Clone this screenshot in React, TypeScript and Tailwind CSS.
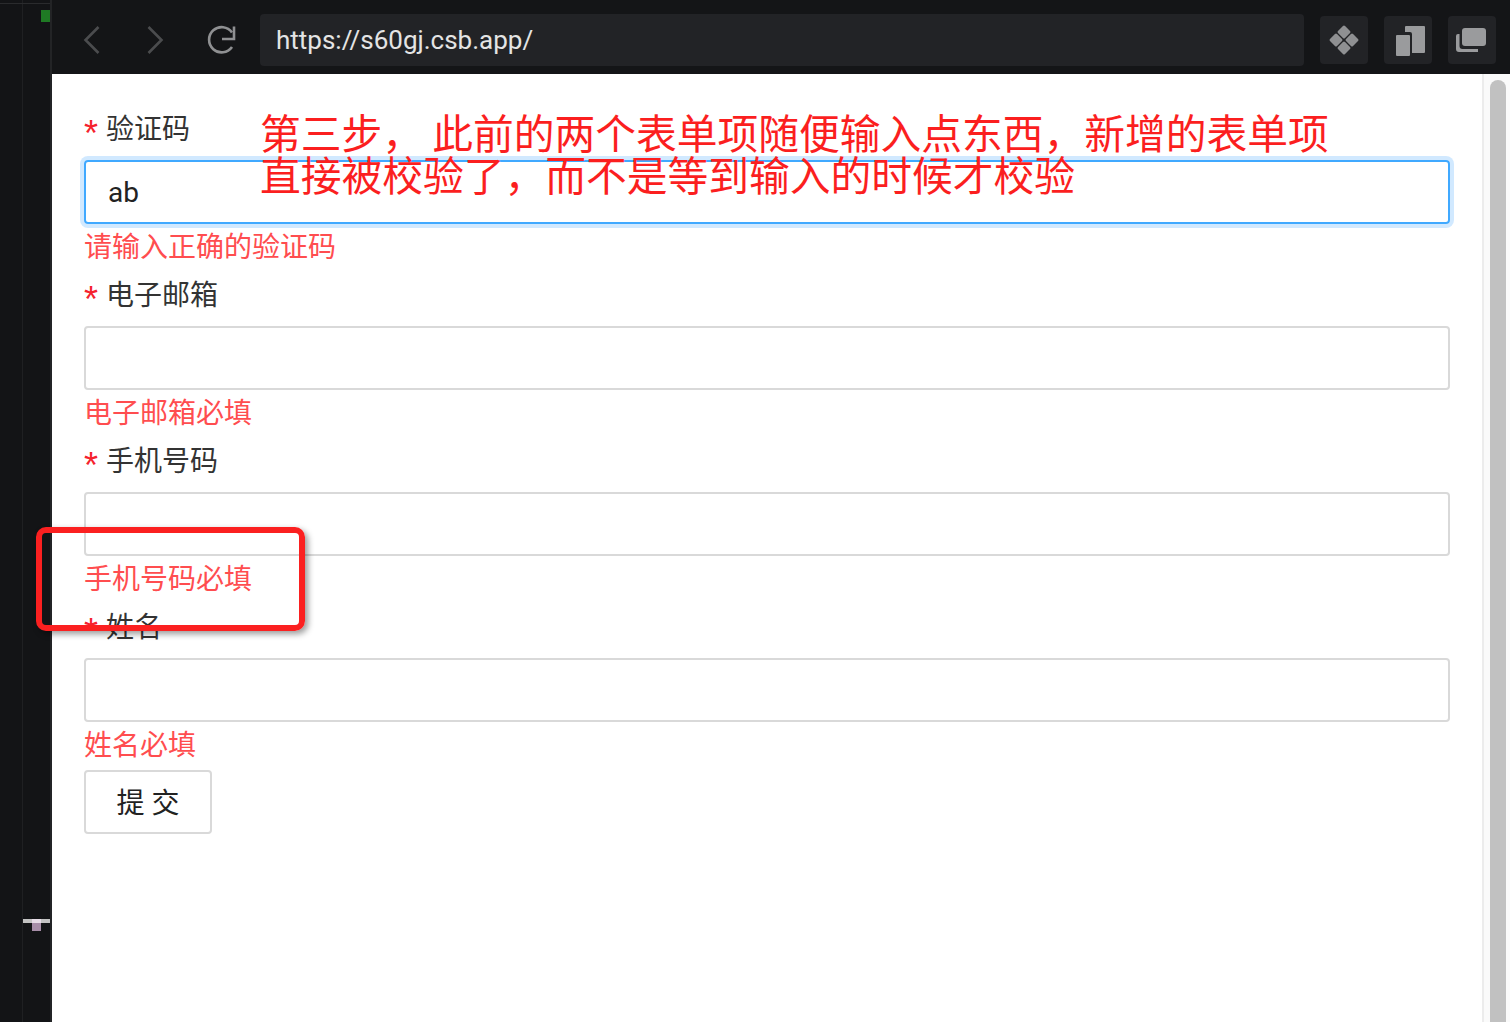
import React from 'react';

const fields = [
  { label: '验证码', error: '请输入正确的验证码', value: 'ab', focused: true },
  { label: '电子邮箱', error: '电子邮箱必填', value: '' },
  { label: '手机号码', error: '手机号码必填', value: '' },
  { label: '姓名', error: '姓名必填', value: '' },
];

function FormItem({ label, error, value, focused }: { label: string; error: string; value: string; focused?: boolean }) {
  return (
    <div className="mb-1">
      <div className="flex items-center h-11 pt-1 text-[28px] text-[#333]">
        <span className="text-[#f5222d] w-[22px] shrink-0 text-[36px] leading-none pt-2 [font-family:'Liberation_Sans',sans-serif]">*</span>
        <span>{label}</span>
      </div>
      <input
        readOnly
        value={value}
        className={
          focused
            ? 'mt-2.5 block w-full h-16 rounded border-2 border-[#40a9ff] px-[22px] text-[28px] text-[#222] outline-none shadow-[0_0_0_4px_rgba(24,144,255,0.2)]'
            : 'mt-2.5 block w-full h-16 rounded border-2 border-[#d9d9d9] px-[22px] text-[28px] text-[#222] outline-none'
        }
      />
      <div className="h-11 leading-[48px] text-[28px] text-[#ff4d4f]">{error}</div>
    </div>
  );
}

function ToolButton({ children }: { children: React.ReactNode }) {
  return <div className="w-12 h-12 rounded bg-[#222326] flex items-center justify-center">{children}</div>;
}

export default function App() {
  return (
    <div className="flex w-[1510px] h-[1022px] overflow-hidden bg-white [font-family:Roboto,'Noto_Sans_CJK_SC',sans-serif]">
      {/* Left strip */}
      <div className="relative w-[52px] shrink-0 bg-[#131416] border-r-2 border-[#232426]">
        <div className="absolute left-[22px] top-0 bottom-0 w-px bg-[#1f2022]" />
        <div className="absolute left-0 top-[3px] w-[50px] h-px bg-[#2a2b2d]" />
        <div className="absolute left-[41px] top-[10px] w-[9px] h-3 bg-[#1f7a24]" />
        <div className="absolute left-[23px] top-[919px] w-[27px] h-1 bg-[#c2c2c2]" />
        <div className="absolute left-[32px] top-[919px] w-[9px] h-1 bg-[#e6dce6]" />
        <div className="absolute left-[32px] top-[923px] w-[9px] h-2 bg-[#a78ea8]" />
      </div>

      <div className="flex-1 flex flex-col min-w-0">
        {/* Browser bar */}
        <div className="h-[74px] shrink-0 bg-[#141517] flex items-center pt-1.5">
          <svg className="ml-6" width="32" height="32" viewBox="0 0 32 32" fill="none" stroke="#4b4c4e" strokeWidth="2.6">
            <path d="M22.5 3 9.5 16l13 13" />
          </svg>
          <svg className="ml-[31px]" width="32" height="32" viewBox="0 0 32 32" fill="none" stroke="#4b4c4e" strokeWidth="2.6">
            <path d="M9.5 3l13 13-13 13" />
          </svg>
          <svg className="ml-[34px]" width="32" height="32" viewBox="0 0 32 32" fill="none" stroke="#8f9092" strokeWidth="2.6">
            <path d="M27 8.5A12.6 12.6 0 1 0 27 23" />
            <path d="M29 2.5V15H17" />
          </svg>
          <div className="ml-[23px] w-[1044px] h-[52px] rounded bg-[#222326] flex items-center pl-4 text-[26px] text-[#e4e4e4]">
            https://s60gj.csb.app/
          </div>
          <div className="ml-4 flex gap-4">
            <ToolButton>
              <svg width="32" height="32" viewBox="0 0 32 32" fill="#8f9092">
                <rect x="11" y="3" width="10" height="10" rx="1.5" transform="rotate(45 16 8)" />
                <rect x="3" y="11" width="10" height="10" rx="1.5" transform="rotate(45 8 16)" />
                <rect x="19" y="11" width="10" height="10" rx="1.5" transform="rotate(45 24 16)" />
                <rect x="11" y="19" width="10" height="10" rx="1.5" transform="rotate(45 16 24)" />
              </svg>
            </ToolButton>
            <ToolButton>
              <svg className="overflow-visible" width="32" height="32" viewBox="0 0 32 32" fill="#9a9b9d">
                <path d="M14 2h18a1 1 0 0 1 1 1v25a1 1 0 0 1-1 1H20V10a2 2 0 0 0-2-2h-5V3a1 1 0 0 1 1-1z" />
                <rect x="4" y="11" width="14" height="21" rx="1" />
              </svg>
            </ToolButton>
            <ToolButton>
              <svg width="32" height="32" viewBox="0 0 32 32" fill="#9a9b9d">
                <rect x="6" y="4" width="24" height="18" rx="3" />
                <path d="M3.5 10v12a3 3 0 0 0 3 3H22v3H3a3 3 0 0 1-3-3V12a2 2 0 0 1 2-2z" />
              </svg>
            </ToolButton>
          </div>
        </div>

        {/* Page */}
        <div className="flex-1 flex min-h-0">
          <div className="relative flex-1 pt-8 pl-8 pr-8">
            {fields.map((f) => (
              <FormItem key={f.label} {...f} />
            ))}
            <button className="block w-32 h-16 pt-1 rounded border-2 border-[#d9d9d9] bg-white text-[28px] text-[#222]">
              提 交
            </button>

            {/* Screenshot annotations */}
            <div className="absolute left-[208px] top-[37px] text-[40.75px] leading-[42px] text-[#fb1f1f] whitespace-pre [font-family:'Noto_Sans_CJK_SC',sans-serif]">
              {'第三步， 此前的两个表单项随便输入点东西，新增的表单项\n直接被校验了，而不是等到输入的时候才校验'}
            </div>
            <div className="absolute left-[-16px] top-[453px] w-[269px] h-[104px] rounded-[10px] border-[6px] border-[#fb2020] shadow-[3px_3px_6px_rgba(0,0,0,0.4)]" />
          </div>

          {/* Scrollbar */}
          <div className="w-7 shrink-0 bg-[#fafafa] border-l-2 border-[#ececec] pl-1.5 pt-1.5">
            <div className="w-4 h-full rounded-t-lg bg-[#c1c1c1]" />
          </div>
        </div>
      </div>
    </div>
  );
}
